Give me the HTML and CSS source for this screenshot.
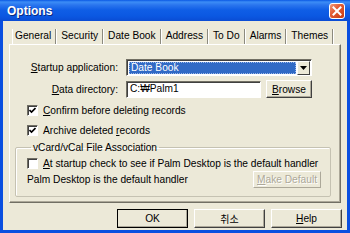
FILE: index.html
```html
<!DOCTYPE html>
<html>
<head>
<meta charset="utf-8">
<link rel="stylesheet" href="styles.css">
</head>
<body>
<div class="window">
  <div class="titlebar">
    <span class="title">Options</span>
    <span class="close"><svg width="10" height="10" viewBox="0 0 10 10"><path d="M1.5 1.5 L8.5 8.5 M8.5 1.5 L1.5 8.5" stroke="#fff" stroke-width="2" stroke-linecap="square"/></svg></span>
  </div>
  <div class="client">
    <div class="tabs">
      <span class="tab active">General</span>
      <span class="tab">Security</span>
      <span class="tab">Date Book</span>
      <span class="tab">Address</span>
      <span class="tab">To Do</span>
      <span class="tab">Alarms</span>
      <span class="tab">Themes</span>
    </div>
    <div class="panel">
      <div class="form">
        <span class="label"><u>S</u>tartup application:</span>
        <div class="select">
          <span class="select-value"><span class="sel-text">Date Book</span></span>
          <span class="drop"><svg width="7" height="4" viewBox="0 0 7 4"><path d="M0 0 H7 L3.5 4 Z" fill="#000"/></svg></span>
        </div>
        <span class="label"><u>D</u>ata directory:</span>
        <div class="dirrow">
          <span class="textbox">C:₩Palm1</span>
          <span class="btn browse"><u>B</u>rowse</span>
        </div>
      </div>
      <div class="checks">
        <div class="check"><span class="box checked"><svg width="7" height="7" viewBox="0 0 7 7"><path d="M0.5 3 L2.5 5 L6.5 1" fill="none" stroke="#000" stroke-width="1.6"/></svg></span><span><u>C</u>onfirm before deleting records</span></div>
        <div class="check"><span class="box checked"><svg width="7" height="7" viewBox="0 0 7 7"><path d="M0.5 3 L2.5 5 L6.5 1" fill="none" stroke="#000" stroke-width="1.6"/></svg></span><span>Archive deleted <u>r</u>ecords</span></div>
      </div>
      <fieldset class="group">
        <legend>vCard/vCal File Association</legend>
        <div class="check gcheck"><span class="box"></span><span><u>A</u>t startup check to see if Palm Desktop is the default handler</span></div>
        <div class="grow">
          <span>Palm Desktop is the default handler</span>
          <span class="btn disabled"><u>M</u>ake Default</span>
        </div>
      </fieldset>
    </div>
    <div class="buttons">
      <span class="btn dlg default">OK</span>
      <span class="btn dlg cjk">취소</span>
      <span class="btn dlg"><u>H</u>elp</span>
    </div>
  </div>
</div>
</body>
</html>
```

FILE: styles.css
```css
* { box-sizing: border-box; }
html, body { margin: 0; padding: 0; }
body {
  font-family: "Liberation Sans", "Noto Sans CJK KR", sans-serif;
  font-size: 10.2px;
  color: #000;
  background: #ECE9D8;
  white-space: nowrap;
}
.window {
  width: 350px;
  height: 233px;
  display: flex;
  flex-direction: column;
  background: #0A4FE0;
}
.titlebar {
  height: 21px;
  display: flex;
  align-items: center;
  justify-content: space-between;
  padding: 0 5px 0 7px;
  background: linear-gradient(to bottom, #0A58E4 0px, #3C8DF6 2px, #2A75EE 5px, #0F5EE6 10px, #0B58E2 16px, #0A4CD4 21px);
}
.title {
  color: #fff;
  font-weight: bold;
  font-size: 12px;
  text-shadow: 1px 1px 0 #0A2A80;
}
.close {
  width: 16px;
  height: 16px;
  margin-top: 1px;
  border: 1px solid #fff;
  border-radius: 3px;
  background: linear-gradient(135deg, #F09A7A 0%, #E35D36 40%, #C43A10 100%);
  display: flex;
  align-items: center;
  justify-content: center;
}
.client {
  flex: 1;
  margin: 0 3px 3px;
  background: #ECE9D8;
  display: flex;
  flex-direction: column;
}
.tabs {
  height: 23px;
  display: flex;
  align-items: flex-end;
  padding-left: 9px;
}
.tab {
  height: 15px;
  line-height: 14px;
  padding: 0 4px 0 5px;
  border-right: 1px solid #8C8A7E;
  box-shadow: 1px 0 0 #fff;
}
.tab.active {
  border-left: 1px solid #fff;
  padding-left: 2px;
}
.panel {
  margin-left: 6px;
  width: 332px;
  height: 159px;
  border: 1px solid;
  border-color: #fff #716F64 #716F64 #fff;
  box-shadow: inset -1px -1px 0 #ACA899;
  padding-top: 14px;
}
.form {
  display: grid;
  grid-template-columns: 108px 186px;
  column-gap: 8px;
  row-gap: 4px;
  align-items: center;
}
.label { text-align: right; }
.select {
  height: 17px;
  display: flex;
  background: #fff;
  border: 1px solid;
  border-color: #716F64 #fff #fff #716F64;
  box-shadow: inset 1px 1px 0 #404040;
  padding: 2px 1px 1px 2px;
}
.select-value {
  flex: 1;
  background: #316AC5;
  outline: 1px dotted #9CB8E8;
  outline-offset: -1px;
  color: #fff;
  line-height: 11px;
  padding-left: 2px;
}
.drop {
  width: 13px;
  margin-top: -1px;
  margin-bottom: -1px;
  margin-left: 1px;
  background: #ECE9D8;
  border: 1px solid;
  border-color: #fff #404040 #404040 #fff;
  display: flex;
  align-items: center;
  justify-content: center;
}
.dirrow {
  display: flex;
  gap: 5px;
  align-items: center;
}
.textbox {
  width: 135px;
  height: 17px;
  background: #fff;
  border: 1px solid;
  border-color: #716F64 #fff #fff #716F64;
  box-shadow: inset 1px 1px 0 #404040;
  padding-left: 3px;
  line-height: 14px;
}
.btn {
  display: flex;
  align-items: center;
  justify-content: center;
  background: #ECE9D8;
  border: 1px solid;
  border-color: #fff #404040 #404040 #fff;
  box-shadow: inset -1px -1px 0 #ACA899;
}
.browse {
  width: 46px;
  height: 18px;
}
.checks {
  margin-top: 2px;
  padding-left: 17px;
}
.check {
  height: 20px;
  display: flex;
  align-items: center;
  gap: 5px;
}
.box {
  width: 11px;
  height: 11px;
  flex: none;
  background: #fff;
  border: 1px solid;
  border-color: #716F64 #fff #fff #716F64;
  box-shadow: inset 1px 1px 0 #404040;
  display: flex;
  align-items: center;
  justify-content: center;
}
.group {
  margin: 1px 9px 0 5px;
  padding: 1px 9px 8px 11px;
  border: 1px solid #C5C2B2;
  border-radius: 2px;
  box-shadow: 1px 1px 0 #fff inset;
}
.group legend {
  padding: 0 2px;
  margin-left: 4px;
  line-height: 13px;
}
.gcheck { height: 16px; }
.grow {
  display: flex;
  align-items: center;
  justify-content: space-between;
  height: 17px;
}
.btn.disabled {
  width: 68px;
  height: 17px;
  color: #ACA899;
  text-shadow: 1px 1px 0 #fff;
  border-color: #fff #ACA899 #ACA899 #fff;
  box-shadow: none;
}
.buttons {
  display: flex;
  justify-content: flex-end;
  gap: 6px;
  padding-right: 5px;
  margin-top: 6px;
}
.btn.dlg {
  width: 71px;
  height: 19px;
}
.btn.default {
  outline: 1px solid #000;
  outline-offset: -1px;
  border-color: #fff #404040 #404040 #fff;
}
.cjk { font-family: "Noto Sans CJK KR", sans-serif; font-size: 10px; }
```
